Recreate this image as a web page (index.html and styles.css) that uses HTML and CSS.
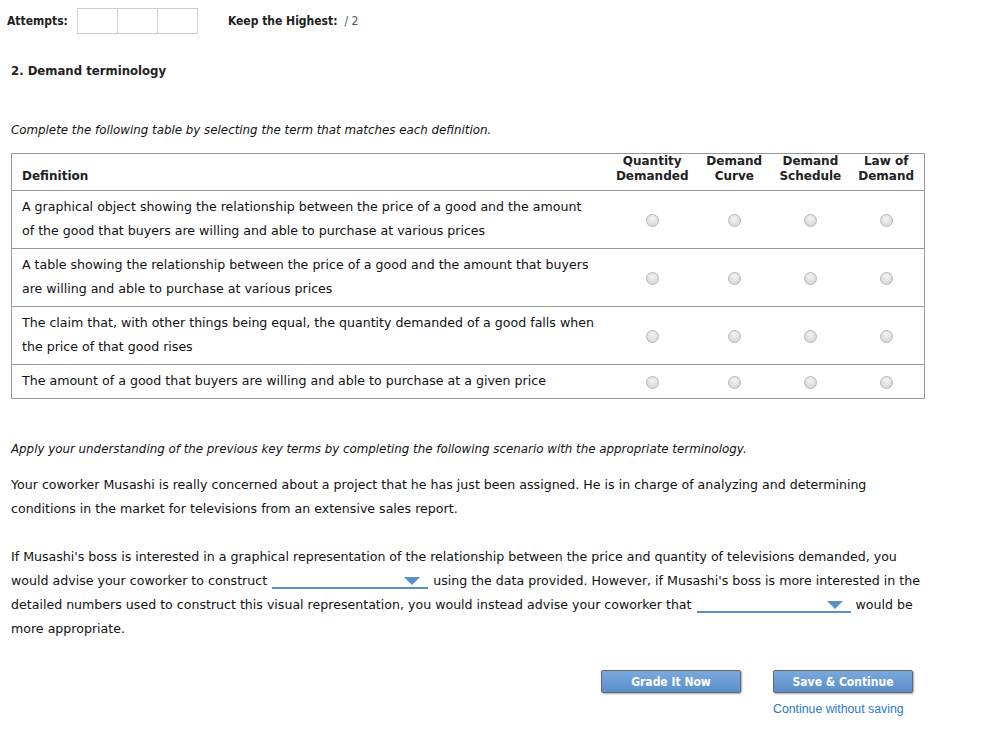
FILE: index.html
```html
<!DOCTYPE html>
<html>
<head>
<meta charset="utf-8">
<link rel="stylesheet" href="styles.css">
</head>
<body>
<div class="page">
  <div class="topbar">
    <span class="lbl">Attempts:</span>
    <div class="boxes"><span class="box"></span><span class="box"></span><span class="box"></span></div>
    <span class="lbl keep">Keep the Highest:</span>
    <span class="score">/ 2</span>
  </div>

  <h2 class="qtitle">2. Demand terminology</h2>

  <p class="instr">Complete the following table by selecting the term that matches each definition.</p>

  <table class="grid">
    <colgroup>
      <col class="c-def"><col class="c-opt1"><col class="c-opt"><col class="c-opt"><col class="c-opt">
    </colgroup>
    <thead>
      <tr>
        <th class="def">Definition</th>
        <th>Quantity<br>Demanded</th>
        <th>Demand<br>Curve</th>
        <th>Demand<br>Schedule</th>
        <th>Law of<br>Demand</th>
      </tr>
    </thead>
    <tbody>
      <tr>
        <td class="def">A graphical object showing the relationship between the price of a good and the amount of the good that buyers are willing and able to purchase at various prices</td>
        <td><span class="radio"></span></td><td><span class="radio"></span></td><td><span class="radio"></span></td><td><span class="radio"></span></td>
      </tr>
      <tr>
        <td class="def">A table showing the relationship between the price of a good and the amount that buyers are willing and able to purchase at various prices</td>
        <td><span class="radio"></span></td><td><span class="radio"></span></td><td><span class="radio"></span></td><td><span class="radio"></span></td>
      </tr>
      <tr>
        <td class="def">The claim that, with other things being equal, the quantity demanded of a good falls when the price of that good rises</td>
        <td><span class="radio"></span></td><td><span class="radio"></span></td><td><span class="radio"></span></td><td><span class="radio"></span></td>
      </tr>
      <tr>
        <td class="def">The amount of a good that buyers are willing and able to purchase at a given price</td>
        <td><span class="radio"></span></td><td><span class="radio"></span></td><td><span class="radio"></span></td><td><span class="radio"></span></td>
      </tr>
    </tbody>
  </table>

  <p class="instr apply">Apply your understanding of the previous key terms by completing the following scenario with the appropriate terminology.</p>

  <p class="body first">Your coworker Musashi is really concerned about a project that he has just been assigned. He is in charge of analyzing and determining conditions in the market for televisions from an extensive sales report.</p>

  <p class="body scen">If Musashi's boss is interested in a graphical representation of the relationship between the price and quantity of televisions demanded, you would advise your coworker to construct <span class="dd dd1"><span class="tri"></span></span> using the data provided. However, if Musashi's boss is more interested in the detailed numbers used to construct this visual representation, you would instead advise your coworker that <span class="dd dd2"><span class="tri"></span></span> would be more appropriate.</p>

  <div class="actions">
    <div class="act">
      <button class="btn">Grade It Now</button>
    </div>
    <div class="act">
      <button class="btn">Save &amp; Continue</button>
      <a class="link" href="#">Continue without saving</a>
    </div>
  </div>
</div>
</body>
</html>
```

FILE: styles.css
```css
html, body {
  margin: 0;
  padding: 0;
  background: #fff;
}
body {
  font-family: "DejaVu Sans", Verdana, sans-serif;
  color: #111;
  font-size: 12.6px;
}
.page {
  width: 1003px;
}
.topbar {
  display: flex;
  align-items: center;
  height: 26px;
  margin-top: 8px;
  padding-left: 7px;
}
.lbl {
  font-family: "DejaVu Sans Condensed", Tahoma, sans-serif;
  font-weight: bold;
  font-size: 12px;
  color: #222;
}
.boxes {
  display: flex;
  margin-left: 9px;
}
.box {
  width: 39px;
  height: 24px;
  border: 1px solid #ccc;
  margin-right: -1px;
}
.keep {
  margin-left: 31px;
}
.score {
  font-family: "DejaVu Sans Condensed", Tahoma, sans-serif;
  font-size: 12px;
  color: #555;
  margin-left: 7px;
}
.qtitle {
  font-family: "DejaVu Sans Condensed", Tahoma, sans-serif;
  font-size: 13px;
  font-weight: bold;
  color: #222;
  margin: 29px 0 0 11px;
}
.instr {
  font-style: italic;
  font-size: 11.85px;
  margin: 45px 0 0 11px;
}
.grid {
  margin: 16px 0 0 11px;
  width: 914px;
  table-layout: fixed;
  border-collapse: collapse;
  border: 1px solid #999;
}
.c-def { width: 596px; }
.c-opt1 { width: 88px; }
.c-opt { width: 76px; }
.grid th {
  font-size: 12px;
  font-weight: bold;
  color: #222;
  vertical-align: bottom;
  text-align: center;
  line-height: 15px;
  padding: 0 0 6px 0;
  height: 30px;
  border-bottom: 1px solid #999;
}
.grid th.def {
  text-align: left;
  padding-left: 10px;
}
.grid td {
  border-bottom: 1px solid #999;
  text-align: center;
  vertical-align: middle;
  padding: 0;
}
.grid td.def {
  text-align: left;
  line-height: 24px;
  padding: 4px 11px 5px 10px;
}
.radio {
  display: inline-block;
  width: 11px;
  height: 11px;
  border-radius: 50%;
  border: 1px solid #b8b8b8;
  background: radial-gradient(circle at 50% 35%, #f4f4f4 0%, #dedede 60%, #d2d2d2 100%);
  vertical-align: middle;
}
.apply {
  margin-top: 43px;
}
.body {
  line-height: 24px;
  margin: 12px 0 0 11px;
  width: 916px;
}
.first {
  margin-top: 17px;
}
.scen {
  margin-top: 24px;
}
.dd {
  display: inline-block;
  position: relative;
  height: 15px;
  border-bottom: 2px solid #5a8fc2;
  vertical-align: -4px;
  margin: 0 1px;
}
.dd1 { width: 156px; }
.dd2 { width: 154px; }
.tri {
  position: absolute;
  right: 8px;
  top: 5px;
  width: 0;
  height: 0;
  border-left: 8px solid transparent;
  border-right: 8px solid transparent;
  border-top: 8px solid #5a8fc2;
}
.actions {
  display: flex;
  margin: 29px 0 0 601px;
  gap: 32px;
}
.act {
  display: flex;
  flex-direction: column;
  align-items: flex-start;
}
.btn {
  width: 140px;
  height: 23px;
  border: 1px solid #666;
  border-radius: 2px;
  background: linear-gradient(#7aa9dc, #5b8fcb);
  color: #fff;
  font-family: "DejaVu Sans Condensed", Tahoma, sans-serif;
  font-weight: bold;
  font-size: 12px;
  box-shadow: 1px 1px 2px rgba(0,0,0,0.35);
  padding: 0;
}
.link {
  margin-top: 9px;
  font-family: "Liberation Sans", Arial, sans-serif;
  font-size: 12.3px;
  color: #2a78cc;
  text-decoration: none;
}
```
